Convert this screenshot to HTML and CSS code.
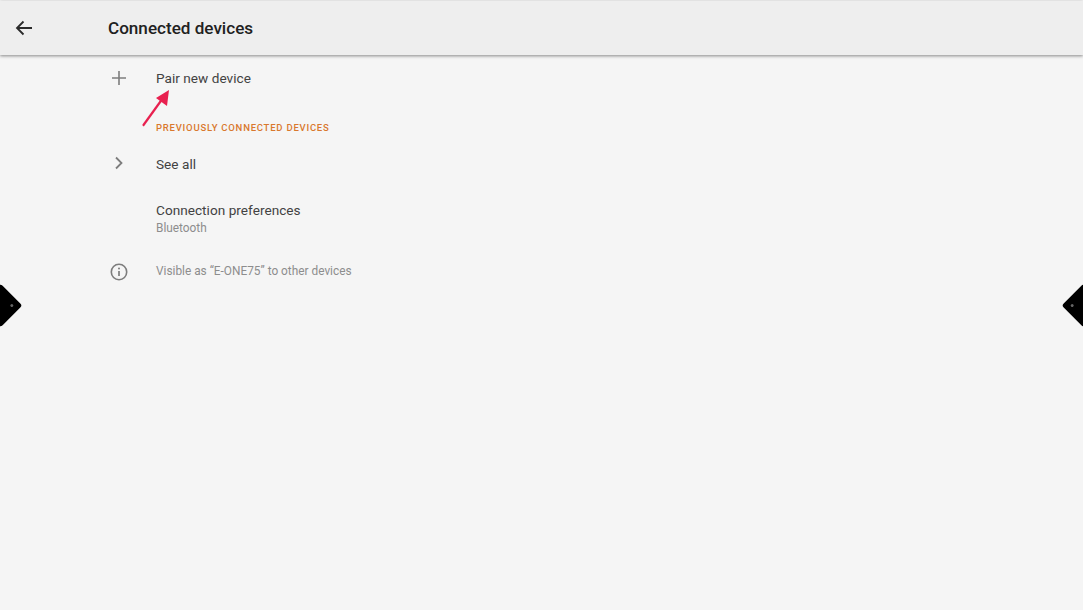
FILE: index.html
```html
<!DOCTYPE html>
<html lang="en">
<head>
    <meta charset="UTF-8">
    <meta name="viewport" content="width=device-width, initial-scale=1.0">
    <title>Connected devices</title>
    <link rel="stylesheet" href="styles.css">
</head>
<body>
    <header class="app-bar">
        <svg class="back-icon" width="24" height="24" viewBox="0 0 24 24"><path d="M20 12H5M11.5 5.5L5 12l6.500 6.500" fill="none" stroke="#2a2a2a" stroke-width="1.8"/></svg>
        <h1>Connected devices</h1>
    </header>
    <main class="list">
        <div class="row row-pair">
            <svg class="icon" width="24" height="24" viewBox="0 0 24 24"><path d="M12 5v14M5 12h14" fill="none" stroke="#7d7d7d" stroke-width="1.6"/></svg>
            <div class="label">Pair new device</div>
        </div>
        <div class="section-title">PREVIOUSLY CONNECTED DEVICES</div>
        <div class="row row-see">
            <svg class="icon icon-up" width="24" height="24" viewBox="0 0 24 24"><path d="M9 6.500l5.500 5.500-5.500 5.500" fill="none" stroke="#7d7d7d" stroke-width="1.8"/></svg>
            <div class="label">See all</div>
        </div>
        <div class="row row-prefs">
            <div class="icon"></div>
            <div>
                <div class="label">Connection preferences</div>
                <div class="sub">Bluetooth</div>
            </div>
        </div>
        <div class="row row-info">
            <svg class="icon icon-down" width="24" height="24" viewBox="0 0 24 24"><circle cx="12" cy="12" r="7.700" fill="none" stroke="#7d7d7d" stroke-width="1.600"/><path d="M12 11v5" stroke="#7d7d7d" stroke-width="1.700"/><circle cx="12" cy="8.500" r="1" fill="#7d7d7d"/></svg>
            <div class="sub">Visible as “E-ONE75” to other devices</div>
        </div>
    </main>
    <!-- red annotation arrow -->
    <svg class="arrow" width="34" height="42" viewBox="0 0 34 42"><path d="M2.500 39L22 12" stroke="#e8204f" stroke-width="2.200" stroke-linecap="round"/><path d="M28 4l-2 16-11-8z" fill="#e8204f"/></svg>
    <div class="side-handle left"><span class="dot"></span></div>
    <div class="side-handle right"><span class="dot"></span></div>
</body>
</html>
```

FILE: styles.css
```css
body {
    margin: 0;
    height: 610px;
    overflow: hidden;
    position: relative;
    background-color: #f5f5f5;
    font-family: Roboto, "Liberation Sans", sans-serif;
    color: #424242;
}
.app-bar {
    height: 54px;
    margin-top: 1px;
    display: flex;
    align-items: center;
    background-color: #eeeeee;
    box-shadow: 0 1px 3px rgba(0, 0, 0, 0.45);
}
.back-icon {
    margin-left: 12px;
}
h1 {
    margin: 0 0 0 72px;
    font-size: 17.1px;
    font-weight: 500;
    color: #212121;
}
.list {
    display: flex;
    flex-direction: column;
}
.row {
    display: flex;
    align-items: center;
}
.icon {
    width: 24px;
    height: 24px;
    margin-left: 107px;
    margin-right: 25px;
    flex: none;
}
.icon-up {
    margin-top: -2px;
}
.icon-down {
    margin-top: 2px;
}
.label {
    font-size: 13.6px;
    letter-spacing: 0.03px;
}
.sub {
    font-size: 11.85px;
    color: #8d8d8d;
    margin-top: 3px;
}
.row-info .sub {
    margin-top: 0;
}
.row-pair {
    margin-top: 11px;
}
.section-title {
    margin: 32px 0 0 156px;
    font-size: 9.5px;
    font-weight: 500;
    letter-spacing: 0.77px;
    color: #d9782d;
}
.row-see {
    margin-top: 20px;
}
.row-prefs {
    margin-top: 27px;
}
.row-info {
    margin-top: 23px;
}
.arrow {
    position: absolute;
    left: 141px;
    top: 86px;
}
.side-handle {
    position: absolute;
    top: 290px;
    width: 31px;
    height: 31px;
    background-color: #000;
    border-radius: 3px;
    transform: rotate(45deg);
}
.side-handle.left {
    left: -15px;
}
.side-handle.right {
    right: -16px;
}
.dot {
    position: absolute;
    width: 3px;
    height: 3px;
    border-radius: 50%;
    background-color: #666;
}
.left .dot {
    left: 22px;
    top: 6px;
}
.right .dot {
    left: 5.500px;
    top: 21.500px;
}
```
